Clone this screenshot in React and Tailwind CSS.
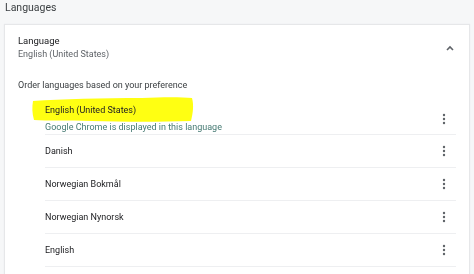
import React from 'react';

const languages = ['Danish', 'Norwegian Bokmål', 'Norwegian Nynorsk', 'English'];

const Kebab = () => (
    <svg width="4" height="12" viewBox="0 0 4 12" className="text-[#5f6368]">
        <circle cx="2" cy="2" r="1.2" fill="currentColor" />
        <circle cx="2" cy="6" r="1.2" fill="currentColor" />
        <circle cx="2" cy="10" r="1.2" fill="currentColor" />
    </svg>
);

const App = () => {
    return (
        <div className="w-[474px] h-[274px] overflow-hidden bg-[#f6f7f8] font-['Roboto',sans-serif]">
            <div className="h-[25px] pl-[5px] pt-[1px] text-[10.5px] leading-[14px] text-[#3c4043]">Languages</div>

            <div className="relative ml-[5px] w-[464px] bg-white shadow-[0_0_1px_1px_#e6e7e9]">
                {/* marker highlight */}
                <svg
                    className="absolute left-[27px] top-[72px] mix-blend-multiply pointer-events-none"
                    width="162" height="26" viewBox="0 0 162 26"
                >
                    <path
                        d="M1,4 C30,2 70,1 110,1 C130,0 150,0 160,1 C162,8 161,16 159,24 C130,25 90,25 60,24 C35,23 15,24 2,23 C0,16 0,10 1,4 Z"
                        fill="#ffff12"
                    />
                </svg>

                <div className="flex items-start justify-between pl-[13px] pr-[14px] pt-[10px]">
                    <div>
                        <div className="text-[9.5px] leading-[12px] text-[#202124]">Language</div>
                        <div className="mt-[1px] text-[9px] leading-[12px] text-[#5f6368]">English (United States)</div>
                    </div>
                    <svg width="10" height="8" viewBox="0 0 10 8" className="mt-[9px] text-[#5f6368]">
                        <path d="M2 6 L5 3 L8 6" fill="none" stroke="currentColor" strokeWidth="1.6" />
                    </svg>
                </div>

                <div className="pl-[13px] pt-[19px] text-[9px] leading-[12px] text-[#3c4043]">
                    Order languages based on your preference
                </div>

                <div className="ml-[40px] mr-[13px]">
                    <div className="relative flex items-center justify-between border-b border-[#eeeff1] pt-[13px] pb-[1px]">
                        <div>
                            <div className="text-[9px] leading-[12px] text-[#202124]">English (United States)</div>
                            <div className="mt-[5px] text-[9px] leading-[12px] text-[#467a73]">Google Chrome is displayed in this language</div>
                        </div>
                        <div className="mr-[10px]"><Kebab /></div>
                    </div>
                    {languages.map((name) => (
                        <div key={name} className="flex h-[33px] items-center justify-between border-b border-[#eeeff1]">
                            <div className="text-[9px] leading-[12px] text-[#202124]">{name}</div>
                            <div className="mr-[10px]"><Kebab /></div>
                        </div>
                    ))}
                </div>
                <div className="h-[10px]" />
            </div>
        </div>
    );
};

export default App;
